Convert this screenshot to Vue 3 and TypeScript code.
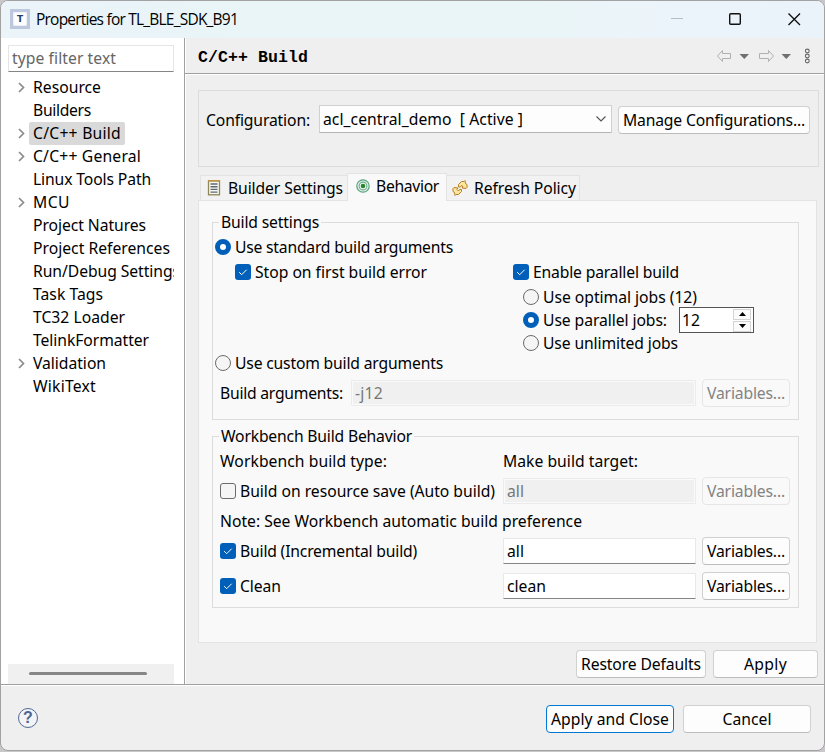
<script setup lang="ts">
import { ref } from 'vue'
import type { Directive } from 'vue'

interface TreeItem {
  label: string
  width: number
  expandable?: boolean
}

const items: TreeItem[] = [
  { label: 'Resource', width: 68, expandable: true },
  { label: 'Builders', width: 58 },
  { label: 'C/C++ Build', width: 88, expandable: true },
  { label: 'C/C++ General', width: 108, expandable: true },
  { label: 'Linux Tools Path', width: 118 },
  { label: 'MCU', width: 37, expandable: true },
  { label: 'Project Natures', width: 113 },
  { label: 'Project References', width: 137 },
  { label: 'Run/Debug Settings', width: 147 },
  { label: 'Task Tags', width: 70 },
  { label: 'TC32 Loader', width: 92 },
  { label: 'TelinkFormatter', width: 116 },
  { label: 'Validation', width: 73, expandable: true },
  { label: 'WikiText', width: 63 },
]

const configuration = 'acl_central_demo  [ Active ]'
const selected = ref('C/C++ Build')
const useCustom = ref(false)
const stopOnError = ref(true)
const parallel = ref(true)
const jobsMode = ref<'optimal' | 'parallel' | 'unlimited'>('parallel')
const jobs = ref(12)
const autoBuild = ref(false)
const incremental = ref(true)
const clean = ref(true)

// Spreads a label's letters so that it takes up the given width.
const vFit: Directive<HTMLElement, number> = {
  mounted(el, { value }) {
    const natural = el.getBoundingClientRect().width
    const count = (el.textContent ?? '').length
    if (count > 0) el.style.letterSpacing = `${(value - natural) / count}px`
  },
}
</script>

<template>
  <div class="desktop">
    <div class="window">
      <header class="titlebar">
        <span class="app-icon"><span class="app-letter">T</span></span>
        <span class="title"><span v-fit="202">Properties for TL_BLE_SDK_B91</span></span>
        <svg class="controls" width="138" height="20" viewBox="0 0 138 20" fill="none">
          <path d="M0 8.500h12" stroke="#b9bdc0" />
          <rect x="58.700" y="3.700" width="10.600" height="10.600" rx="1" stroke="#111" stroke-width="1.400" />
          <path d="M117.500 3.500l11.500 11.500M129 3.500l-11.500 11.500" stroke="#111" stroke-width="1.400" />
        </svg>
      </header>

      <div class="body">
        <aside class="side">
          <div class="filter"><span v-fit="104">type filter text</span></div>
          <ul class="tree">
            <li v-for="item in items" :key="item.label" @click="selected = item.label">
              <svg class="twisty" width="9" height="11" viewBox="0 0 9 11" fill="none">
                <path v-if="item.expandable" d="M2 1l4.500 4.500L2 10" stroke="#8b8b8b" stroke-width="1.700" />
              </svg>
              <span class="node" :class="{ selected: selected === item.label }">
                <span v-fit="item.width">{{ item.label }}</span>
              </span>
            </li>
          </ul>
          <div class="scroll"><i></i></div>
        </aside>

        <main class="main">
          <div class="page-head">
            <h1><span v-fit="110">C/C++ Build</span></h1>
            <svg width="96" height="18" viewBox="0 0 96 18" fill="none">
              <path d="M1.500 9l5-5.500V6.500H14.500v5H6.500v3z" stroke="#b0b0b0" stroke-linejoin="round" />
              <path d="M23.500 7h9.500l-4.700 5z" fill="#6f7073" />
              <path d="M57.500 9l-5-5.500V6.500H43.500v5h9v3z" stroke="#b0b0b0" stroke-linejoin="round" />
              <path d="M65.500 7h9.500l-4.700 5z" fill="#6f7073" />
              <g stroke="#666" stroke-width="1.100">
                <circle cx="91.300" cy="4" r="1.900" />
                <circle cx="91.300" cy="9" r="1.900" />
                <circle cx="91.300" cy="14" r="1.900" />
              </g>
            </svg>
          </div>

          <div class="content">
            <section class="config">
              <span class="config-label"><span v-fit="104">Configuration:</span></span>
              <div class="combo">
                <span v-fit="200" class="pre">{{ configuration }}</span>
                <svg width="12" height="8" viewBox="0 0 12 8" fill="none">
                  <path d="M1.500 1.500L6 6l4.500-4.500" stroke="#555" stroke-width="1.200" />
                </svg>
              </div>
              <button class="btn manage"><span v-fit="182">Manage Configurations...</span></button>
            </section>

            <nav class="tabs">
              <div class="tab first">
                <svg width="14" height="16" viewBox="0 0 14 16">
                  <rect x="1.500" y=".800" width="11" height="14" fill="#f7f7ef" stroke="#8f8757" stroke-width="1.300" />
                  <path d="M1 .800h12" stroke="#bd9440" stroke-width="1.400" />
                  <path d="M3.500 4h7M3.500 6.700h7M3.500 9.400h7M3.500 12.100h7" stroke="#5f6b74" stroke-width="1.400" />
                </svg>
                <span v-fit="115">Builder Settings</span>
              </div>
              <div class="tab active">
                <svg width="14" height="14" viewBox="0 0 14 14" fill="none">
                  <circle cx="7" cy="7" r="6.200" fill="#eef7f0" stroke="#57a17b" stroke-width="1.200" />
                  <circle cx="7" cy="7" r="3.900" stroke="#6aab88" stroke-width="1.100" />
                  <circle cx="7" cy="7" r="2.300" fill="#2c8234" />
                </svg>
                <span v-fit="63">Behavior</span>
              </div>
              <div class="tab last">
                <svg width="16" height="16" viewBox="0 0 16 16" fill="#fbe6a0" stroke="#b67d22" stroke-linejoin="round">
                  <path d="M6.500 4.500L9.500 1.500h2.500l1-1 .5 3 1.500 1v3l-1 1-4-.500 1-1.500L9.500 5.500l-1 1.500h-2z" />
                  <path d="M9.500 11.500l-3 3H4l-1 1-.5-3-1.500-1v-3l1-1 4 .500-1 1.500 1.500 1.500 1-1.500h2z" />
                </svg>
                <span v-fit="102">Refresh Policy</span>
              </div>
            </nav>

            <div class="panel">
              <fieldset class="group settings">
                <legend><span v-fit="98">Build settings</span></legend>
                <div class="row r-std">
                  <i class="radio" :class="{ on: !useCustom }" @click="useCustom = false"></i>
                  <span v-fit="218">Use standard build arguments</span>
                </div>
                <div class="row r-stop">
                  <div class="left-half indent">
                    <i class="check" :class="{ on: stopOnError }" @click="stopOnError = !stopOnError">
                      <svg viewBox="0 0 16 16"><path d="M4.200 8.200l2.500 2.500 5-5" /></svg>
                    </i>
                    <span v-fit="172">Stop on first build error</span>
                  </div>
                  <i class="check" :class="{ on: parallel }" @click="parallel = !parallel">
                    <svg viewBox="0 0 16 16"><path d="M4.200 8.200l2.500 2.500 5-5" /></svg>
                  </i>
                  <span v-fit="146">Enable parallel build</span>
                </div>
                <div class="jobs">
                  <div class="row r-opt">
                    <i class="radio" :class="{ on: jobsMode === 'optimal' }" @click="jobsMode = 'optimal'"></i>
                    <span v-fit="154">Use optimal jobs (12)</span>
                  </div>
                  <div class="row r-par">
                    <i class="radio" :class="{ on: jobsMode === 'parallel' }" @click="jobsMode = 'parallel'"></i>
                    <span v-fit="124">Use parallel jobs:</span>
                    <div class="spinner">
                      <span v-fit="18">{{ jobs }}</span>
                      <div class="steps">
                        <b @click="jobs++"><svg width="7" height="4" viewBox="0 0 7 4"><path d="M0 4l3.500-4L7 4z" /></svg></b>
                        <b @click="jobs--"><svg width="7" height="4" viewBox="0 0 7 4"><path d="M0 0l3.500 4L7 0z" /></svg></b>
                      </div>
                    </div>
                  </div>
                  <div class="row r-unl">
                    <i class="radio" :class="{ on: jobsMode === 'unlimited' }" @click="jobsMode = 'unlimited'"></i>
                    <span v-fit="135">Use unlimited jobs</span>
                  </div>
                </div>
                <div class="row r-custom">
                  <i class="radio" :class="{ on: useCustom }" @click="useCustom = true"></i>
                  <span v-fit="208">Use custom build arguments</span>
                </div>
                <div class="row r-args">
                  <span class="args-label"><span v-fit="123">Build arguments:</span></span>
                  <div class="field wide disabled"><span v-fit="28">-j12</span></div>
                  <button class="btn variables" disabled><span v-fit="78">Variables...</span></button>
                </div>
              </fieldset>

              <fieldset class="group bench">
                <legend><span v-fit="191">Workbench Build Behavior</span></legend>
                <div class="row b-type">
                  <div class="label-col"><span v-fit="167">Workbench build type:</span></div>
                  <span v-fit="135">Make build target:</span>
                </div>
                <div class="row b-auto">
                  <div class="label-col">
                    <i class="check" :class="{ on: autoBuild }" @click="autoBuild = !autoBuild">
                      <svg viewBox="0 0 16 16"><path d="M4.200 8.200l2.500 2.500 5-5" /></svg>
                    </i>
                    <span v-fit="255">Build on resource save (Auto build)</span>
                  </div>
                  <div class="field disabled"><span v-fit="17">all</span></div>
                  <button class="btn variables" disabled><span v-fit="78">Variables...</span></button>
                </div>
                <div class="row b-note"><span v-fit="362">Note: See Workbench automatic build preference</span></div>
                <div class="row b-inc">
                  <div class="label-col">
                    <i class="check" :class="{ on: incremental }" @click="incremental = !incremental">
                      <svg viewBox="0 0 16 16"><path d="M4.200 8.200l2.500 2.500 5-5" /></svg>
                    </i>
                    <span v-fit="177">Build (Incremental build)</span>
                  </div>
                  <div class="field"><span v-fit="17">all</span></div>
                  <button class="btn variables"><span v-fit="78">Variables...</span></button>
                </div>
                <div class="row b-clean">
                  <div class="label-col">
                    <i class="check" :class="{ on: clean }" @click="clean = !clean">
                      <svg viewBox="0 0 16 16"><path d="M4.200 8.200l2.500 2.500 5-5" /></svg>
                    </i>
                    <span v-fit="41">Clean</span>
                  </div>
                  <div class="field"><span v-fit="39">clean</span></div>
                  <button class="btn variables"><span v-fit="78">Variables...</span></button>
                </div>
              </fieldset>
            </div>

            <div class="page-actions">
              <button class="btn restore"><span v-fit="120">Restore Defaults</span></button>
              <button class="btn apply"><span v-fit="43">Apply</span></button>
            </div>
          </div>
        </main>
      </div>

      <footer class="footer">
        <span class="help">?</span>
        <button class="btn primary"><span v-fit="118">Apply and Close</span></button>
        <button class="btn cancel"><span v-fit="49">Cancel</span></button>
      </footer>
    </div>
  </div>
</template>

<style>
body {
  margin: 0;
}
</style>

<style scoped>
* {
  box-sizing: border-box;
}
.desktop {
  width: 825px;
  height: 752px;
  padding-bottom: 1px;
  background: #c9c7ca;
  font: 15.700px/20px 'Noto Sans', 'Open Sans', sans-serif;
  color: #000;
  overflow: hidden;
}
.window {
  display: flex;
  flex-direction: column;
  width: 825px;
  height: 751px;
  border: 1px solid #a2a2a2;
  border-radius: 8px;
  background: #efefef;
  overflow: hidden;
}
.titlebar {
  display: flex;
  align-items: center;
  height: 37px;
  flex: none;
  padding: 0 23px 0 9px;
  background: linear-gradient(90deg, #eaf4f9 0%, #e9f5f6 60%, #ecf4fb 82%, #eaf3f9 100%);
}
.app-icon {
  display: flex;
  align-items: center;
  justify-content: center;
  width: 20px;
  height: 20px;
  margin-top: -1px;
  border: 3px solid #bdc8de;
  background: #fff;
  box-shadow: inset 0 0 2px #bdc8de;
}
.app-letter {
  font: bold 9px/12px 'DejaVu Sans', sans-serif;
  color: #223f70;
}
.title {
  flex: 1;
  margin: -2px 0 0 6px;
  font: 15.500px/20px 'Open Sans', sans-serif;
}
.controls {
  margin-right: -8px;
}
.body {
  display: flex;
  height: 646px;
  flex: none;
}
.side {
  display: flex;
  flex-direction: column;
  width: 183px;
  flex: none;
  padding: 7px 10px 0 7px;
  background: #fff;
}
.filter {
  display: flex;
  align-items: center;
  height: 27px;
  flex: none;
  padding: 0 0 2px 3px;
  border: 1px solid #e5e5e5;
  border-bottom-color: #858585;
  color: #666;
}
.tree {
  flex: 1;
  margin: 4px 0 0;
  padding: 0;
  list-style: none;
  overflow: hidden;
}
.tree li {
  display: flex;
  align-items: center;
  height: 23px;
  padding-left: 9px;
  white-space: nowrap;
}
.twisty {
  flex: none;
  margin-right: 3px;
}
.node {
  height: 23px;
  padding: 1px 4px;
  border-radius: 2px;
}
.node.selected {
  background: #d9d9d9;
}
.scroll {
  height: 20px;
  flex: none;
  padding: 8px 27px 0 21px;
  background: #f0f0f0;
}
.scroll i {
  display: block;
  height: 3px;
  border-radius: 2px;
  background: #868686;
}
.main {
  flex: 1;
  border-left: 1px solid #a0a0a0;
  box-shadow: inset 1px 0 #fff;
}
.page-head {
  display: flex;
  align-items: center;
  justify-content: space-between;
  height: 36px;
  padding: 1px 12px 0 13px;
  border-bottom: 1px solid #a0a0a0;
  box-shadow: 0 1px #fff;
}
h1 {
  margin: 4px 0 0;
  font: bold 16.500px/20px 'Liberation Mono', monospace;
}
.content {
  padding: 16px 0 0 13px;
}
.config {
  display: flex;
  align-items: flex-start;
  width: 621px;
  height: 77px;
  padding: 15px 0 0 7px;
  border: 1px solid #dcdcdc;
}
.config-label {
  width: 113px;
  margin-top: 4px;
}
.combo {
  display: flex;
  align-items: center;
  justify-content: space-between;
  width: 293px;
  height: 28px;
  margin-top: -1px;
  padding: 0 4px 0 3px;
  border: 1px solid #d0d0d0;
  border-bottom-color: #b5b5b5;
  border-radius: 1px;
  background: #fdfdfd;
}
.pre {
  white-space: pre;
}
.btn {
  display: flex;
  align-items: center;
  justify-content: center;
  height: 28px;
  flex: none;
  padding: 0;
  border: 1px solid #d0d0d0;
  border-bottom-color: #bcbcbc;
  border-radius: 4px;
  background: #fdfdfd;
  font: inherit;
  color: #000;
  white-space: nowrap;
}
.btn:disabled {
  background: #f9f9f9;
  border-color: #e6e6e6;
  color: #838383;
}
.manage {
  width: 192px;
  margin-left: 6px;
}
.tabs {
  display: flex;
  align-items: flex-end;
  height: 33px;
  padding-left: 2px;
}
.tab {
  display: flex;
  align-items: center;
  height: 25px;
  border: 1px solid #e3e3e3;
  border-bottom: 0;
  background: #f2f2f2;
  white-space: nowrap;
}
.tab.first {
  width: 147px;
  padding-left: 6px;
  border-right: 0;
}
.tab.first svg {
  margin-right: 7px;
}
.tab.active {
  position: relative;
  width: 100px;
  height: 28px;
  margin-bottom: -1px;
  padding: 0 0 3px 8px;
  background: #f9f9f9;
}
.tab.active svg {
  margin-right: 6px;
}
.tab.last {
  width: 133px;
  padding-left: 5px;
  border-left: 0;
}
.tab.last svg {
  margin-right: 6px;
}
.panel {
  width: 619px;
  height: 443px;
  padding: 21px 0 0 13px;
  border: 1px solid #e3e3e3;
  background: #f9f9f9;
}
.group {
  position: relative;
  width: 587px;
  min-width: 0;
  margin: 0;
  border: 1px solid #dcdcdc;
}
.settings {
  height: 198px;
  padding: 12px 0 0;
}
.bench {
  height: 172px;
  margin-top: 16px;
  padding: 12px 0 0;
}
legend {
  position: absolute;
  top: -11px;
  left: 6px;
  padding: 0 2px;
  background: #f9f9f9;
}
.row {
  display: flex;
  align-items: center;
  white-space: nowrap;
}
.left-half,
.label-col {
  display: flex;
  align-items: center;
  flex: none;
}
.left-half {
  width: 300px;
}
.indent {
  padding-left: 22px;
}
.label-col {
  width: 283px;
}
.r-std {
  height: 24px;
  padding-left: 2px;
}
.r-stop {
  height: 26px;
}
.jobs {
  padding-left: 310px;
}
.r-opt {
  height: 24px;
}
.r-par {
  height: 22px;
}
.r-unl {
  height: 24px;
}
.r-custom {
  height: 16px;
  padding-left: 2px;
}
.r-args {
  height: 44px;
  padding-left: 7px;
}
.args-label {
  width: 131px;
}
.bench .row {
  padding-left: 7px;
}
.b-type {
  height: 24px;
}
.b-auto {
  height: 36px;
}
.b-note {
  height: 24px;
}
.b-inc {
  height: 36px;
}
.b-clean {
  height: 34px;
}
.radio,
.check {
  display: block;
  width: 16px;
  height: 16px;
  flex: none;
  margin-right: 4px;
  border: 1px solid #6b6b6b;
  background: #f5f5f5;
}
.radio {
  border-radius: 50%;
}
.radio.on {
  border: 5px solid #005fb8;
  background: #fff;
}
.check {
  border-radius: 3px;
}
.check svg {
  display: none;
  fill: none;
  stroke: #fff;
  stroke-width: 1;
}
.check.on {
  border: 0;
  background: #005fb8;
}
.check.on svg {
  display: block;
}
.spinner {
  display: flex;
  justify-content: space-between;
  align-items: center;
  width: 75px;
  height: 26px;
  flex: none;
  margin-left: 12px;
  padding: 0 1px 0 2px;
  border: 1px solid #555;
  background: #fff;
}
.steps {
  display: flex;
  flex-direction: column;
  gap: 1px;
  width: 19px;
}
.steps b {
  display: flex;
  align-items: center;
  justify-content: center;
  width: 18px;
  height: 11px;
  border: 1px solid #d4d4d4;
  background: #fbfbfb;
}
.field {
  display: flex;
  align-items: center;
  width: 193px;
  height: 26px;
  flex: none;
  padding-left: 3px;
  border: 1px solid #e8e8e8;
  border-bottom-color: #858585;
  border-radius: 1px;
  background: #fff;
}
.field.wide {
  width: 345px;
}
.field.disabled {
  border-color: #ebebeb;
  background: #f0f0f0;
  box-shadow: inset 0 0 0 1px #fafafa;
  color: #777;
}
.variables {
  width: 88px;
  margin-left: 6px;
}
.page-actions {
  display: flex;
  gap: 7px;
  padding: 7px 0 0 378px;
}
.restore {
  width: 130px;
}
.apply {
  width: 105px;
}
.footer {
  display: flex;
  align-items: flex-start;
  flex: 1;
  padding: 20px 13px 0 17px;
  border-top: 1px solid #a0a0a0;
  box-shadow: inset 0 1px #fff;
}
.help {
  width: 20px;
  height: 20px;
  margin: 3px auto 0 0;
  border: 1px solid #506890;
  border-radius: 50%;
  background: #f3f4f8;
  color: #4c6592;
  font: bold 16px/18px 'Liberation Sans', sans-serif;
  text-align: center;
}
.primary {
  width: 128px;
  border-color: #0078d4;
}
.cancel {
  width: 128px;
  margin-left: 9px;
}
</style>
